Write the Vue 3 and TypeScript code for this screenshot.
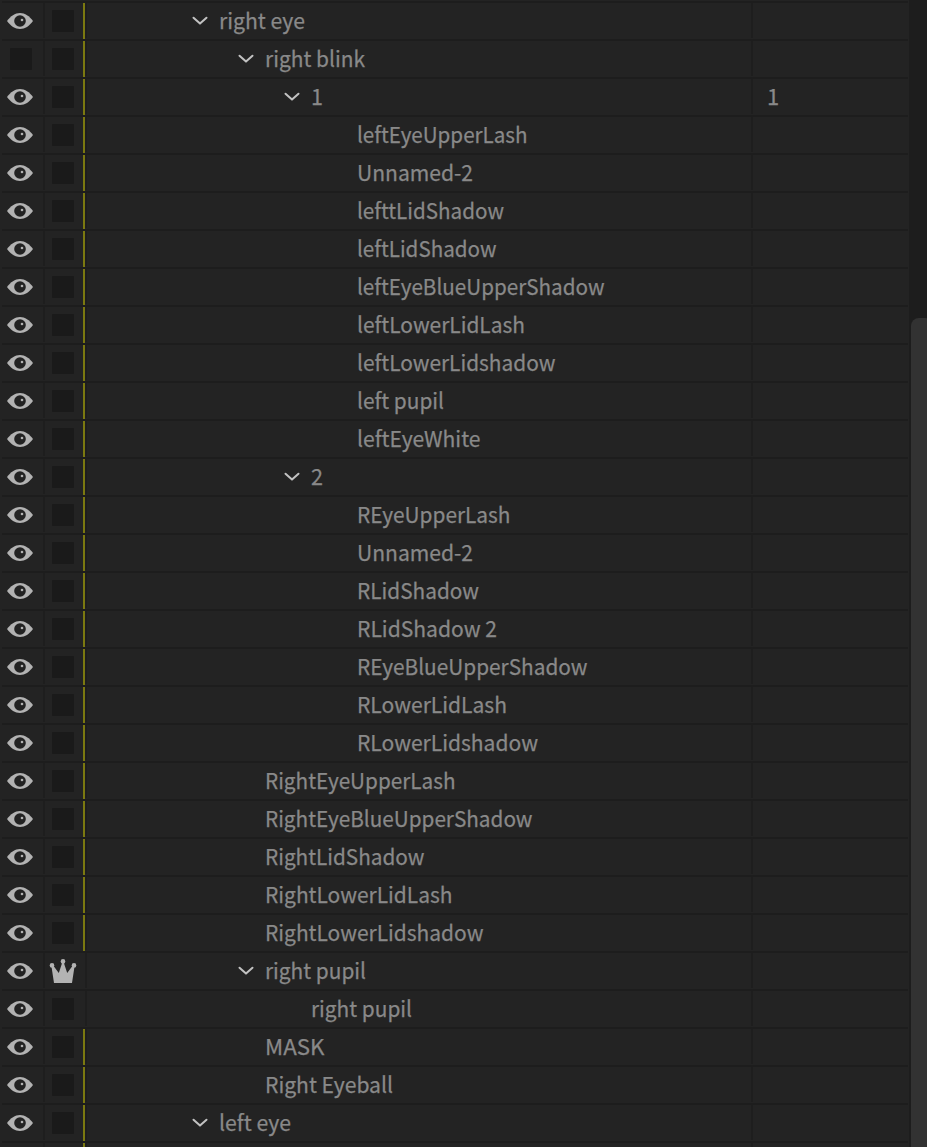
<script setup lang="ts">
interface Layer {
  name: string
  level: number
  width: number
  open?: boolean
  hidden?: boolean
  crown?: boolean
  plain?: boolean
  value?: string
}

const layers: Layer[] = [
  { name: 'right eye', level: 0, width: 86, open: true },
  { name: 'right blink', level: 1, width: 100, open: true, hidden: true },
  { name: '1', level: 2, width: 12, open: true, value: '1' },
  { name: 'leftEyeUpperLash', level: 3, width: 170.5 },
  { name: 'Unnamed-2', level: 3, width: 116 },
  { name: 'lefttLidShadow', level: 3, width: 147 },
  { name: 'leftLidShadow', level: 3, width: 139.5 },
  { name: 'leftEyeBlueUpperShadow', level: 3, width: 247.5 },
  { name: 'leftLowerLidLash', level: 3, width: 168 },
  { name: 'leftLowerLidshadow', level: 3, width: 198.5 },
  { name: 'left pupil', level: 3, width: 87 },
  { name: 'leftEyeWhite', level: 3, width: 123.5 },
  { name: '2', level: 2, width: 12, open: true },
  { name: 'REyeUpperLash', level: 3, width: 153.5 },
  { name: 'Unnamed-2', level: 3, width: 116 },
  { name: 'RLidShadow', level: 3, width: 122 },
  { name: 'RLidShadow 2', level: 3, width: 140 },
  { name: 'REyeBlueUpperShadow', level: 3, width: 230.5 },
  { name: 'RLowerLidLash', level: 3, width: 150 },
  { name: 'RLowerLidshadow', level: 3, width: 181 },
  { name: 'RightEyeUpperLash', level: 1, width: 190.5 },
  { name: 'RightEyeBlueUpperShadow', level: 1, width: 267.5 },
  { name: 'RightLidShadow', level: 1, width: 159.5 },
  { name: 'RightLowerLidLash', level: 1, width: 187.5 },
  { name: 'RightLowerLidshadow', level: 1, width: 218.5 },
  { name: 'right pupil', level: 1, width: 101, open: true, crown: true, plain: true },
  { name: 'right pupil', level: 2, width: 101, plain: true },
  { name: 'MASK', level: 1, width: 59.5 },
  { name: 'Right Eyeball', level: 1, width: 128 },
  { name: 'left eye', level: 0, width: 72, open: true },
  { name: '', level: 0, width: 0 },
]
</script>

<template>
  <div class="panel">
    <div class="rows">
      <div v-for="(layer, i) in layers" :key="i" class="row">
        <div class="cell eye-cell">
          <span v-if="layer.hidden" class="box"></span>
          <svg v-else class="eye" width="26" height="16" viewBox="0 0 26 16">
            <path d="M0 8C3.6 3 8 0 13 0S22.4 3 26 8C22.4 13 18 16 13 16S3.6 13 0 8Z" fill="#b3b3b3" />
            <circle cx="13" cy="8" r="5.8" fill="#232323" />
            <circle cx="15" cy="7" r="1.3" fill="#b3b3b3" />
          </svg>
        </div>
        <div class="cell crown-cell">
          <svg v-if="layer.crown" class="crown" width="28" height="24" viewBox="0 0 28 24">
            <g fill="#b3b3b3">
              <circle cx="3" cy="6.4" r="2.3" />
              <circle cx="14" cy="2.4" r="2.3" />
              <circle cx="25" cy="6.4" r="2.3" />
              <path d="M2.4 7L4.2 6.6L9.8 14L13.1 4H14.9L18.2 14L23.8 6.6L25.6 7L23 24H5Z" />
            </g>
          </svg>
          <span v-else class="box"></span>
        </div>
        <div class="strip" :class="{ plain: layer.plain }"></div>
        <div class="cell name-cell" :style="{ paddingLeft: `${105 + layer.level * 46}px` }">
          <svg class="chevron" :class="{ leaf: !layer.open }" width="16" height="10" viewBox="0 0 16 10">
            <path d="M1.5 1.7L8 7.6L14.5 1.7" fill="none" stroke="#c2c2c2" stroke-width="2" stroke-linecap="round" stroke-linejoin="round" />
          </svg>
          <svg v-if="layer.name" class="label" height="36" :width="layer.width + 4">
            <text x="0" y="26" :textLength="layer.width" lengthAdjust="spacingAndGlyphs">{{ layer.name }}</text>
          </svg>
        </div>
        <div class="cell value-cell">{{ layer.value }}</div>
      </div>
    </div>
    <div class="track"><div class="thumb"></div></div>
  </div>
</template>

<style>
body {
  margin: 0;
  overflow: hidden;
  background: #232323;
}
</style>

<style scoped>
.panel {
  display: flex;
  width: 927px;
  height: 1147px;
  overflow: hidden;
  background: #232323;
  color: #898989;
  font-family: "Noto Sans CJK SC", "Open Sans", sans-serif;
  font-size: 22px;
}
.rows {
  width: 906px;
  margin-left: 2px;
  padding-top: 1px;
  flex-shrink: 0;
}
.row {
  display: flex;
  box-sizing: border-box;
  height: 38px;
  border-top: 2px solid #1d1d1d;
}
.cell {
  display: flex;
  align-items: center;
  box-sizing: border-box;
  height: 35px;
}
.eye-cell {
  width: 43px;
  border-right: 2px solid #1e1e1e;
  padding-left: 5px;
}
.eye-cell .box {
  margin-left: 3px;
}
.crown-cell {
  width: 38px;
  padding-left: 7px;
}
.box {
  width: 22px;
  height: 22px;
  margin-top: 1px;
  border-radius: 1px;
  background: #1a1a1a;
}
.eye {
  margin-top: 1px;
}
.crown {
  margin-left: -3px;
  margin-top: 1px;
}
.strip {
  width: 2px;
  height: 36px;
  background: #7b7910;
}
.strip.plain {
  background: transparent;
}
.name-cell {
  width: 668px;
  border-left: 2px solid #1e1e1e;
  border-right: 2px solid #1e1e1e;
}
.chevron {
  flex-shrink: 0;
  margin: 0 11px 0 0;
}
.chevron.leaf {
  visibility: hidden;
}
.label {
  flex-shrink: 0;
  overflow: visible;
  align-self: flex-start;
}
.label text {
  fill: #898989;
  stroke: #898989;
  stroke-width: 0.25px;
}
.value-cell {
  height: 33px;
  padding-left: 14px;
  line-height: 33px;
  -webkit-text-stroke: 0.25px #898989;
}
.track {
  flex: 1;
  box-sizing: border-box;
  overflow: hidden;
  margin-left: 1px;
  padding: 318px 0 0 2px;
  background: #1d1d1d;
}
.thumb {
  width: 22px;
  height: 829px;
  border-radius: 8px 8px 0 0;
  background: #323232;
}
</style>
